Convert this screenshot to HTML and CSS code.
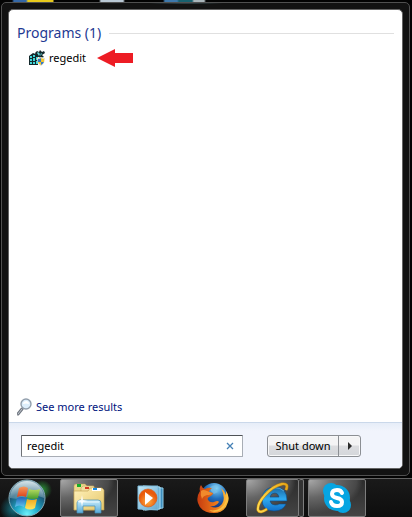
FILE: index.html
```html
<!DOCTYPE html>
<html lang="en">
<head>
<meta charset="utf-8">
<title>Start menu</title>
<link rel="stylesheet" href="styles.css">
</head>
<body>
<main class="frame">
  <div class="panel">
    <section class="results">
      <h1 class="heading">Programs (1)</h1>
      <div class="result-row">
        <a class="result" href="#">
          <svg width="18" height="18" viewBox="0 0 18 18" aria-hidden="true">
            <path d="M1 7l4-3 5 2v10H1z" fill="#14292c"/>
            <path d="M2 7h2v2H2zM5 6h2v2H5zM2 10h2v2H2zM5 9h2v3H5zM8 8h2v3H8zM2 13h2v2H2zM5 13h2v2H5zM8 12h2v3H8z" fill="#3fd5d8"/>
            <path d="M7 4l2-2 2 1 1-2 2 2 2-1 1 2-3 2 2 2-3 1-5-2z" fill="#14292c"/>
            <path d="M9 4l1-1 2 2-1 2zM13 4l1 1-2 2z" fill="#6bdcdd"/>
            <path d="M9 9q2.500 0 4-1 2 1 4 1 0 6-4 8-4-2-4-8z" fill="#e9e4c7"/>
            <path d="M10 10q2 0 3-1v4h-3zM13 13h3q-1 2-3 3z" fill="#3578c5"/>
            <path d="M13 9q1 1 3 1v3h-3zM10 13h3v3q-2-1-3-3z" fill="#f5c72c"/>
          </svg>
          <span>regedit</span>
        </a>
        <svg class="arrow" width="36" height="18" viewBox="0 0 36 18" aria-hidden="true">
          <path d="M0 9L18 0v4h18v10H18v4z" fill="#ed1c24"/>
        </svg>
      </div>
      <a class="more" href="#">
        <svg width="16" height="18" viewBox="0 0 16 18" aria-hidden="true">
          <path d="M5 11L1 16" stroke="#707781" stroke-width="3" stroke-linecap="round"/>
          <path d="M5 11L1 16" stroke="#c3c8cf" stroke-linecap="round"/>
          <circle cx="9" cy="6" r="5" fill="#dceefb" stroke="#929fac" stroke-width="1.400"/>
          <path d="M6 6q0-3 4-3 2 1 2 3-3-1-6 0z" fill="#fff"/>
        </svg>
        <span>See more results</span>
      </a>
    </section>
    <footer class="footer">
      <div class="search">
        <input class="search-input" type="text" value="regedit" aria-label="Search programs and files">
        <button class="clear" type="button" aria-label="Clear">
          <svg width="8" height="8" viewBox="0 0 8 8"><path d="M1 1l6 6M7 1L1 7" stroke="#4580b5" stroke-width="1.300"/></svg>
        </button>
      </div>
      <div class="power">
        <button class="shut" type="button">Shut down</button>
        <button class="options" type="button" aria-label="Power options">
          <svg width="4" height="8" viewBox="0 0 4 8"><path d="M0 0l4 4-4 4z" fill="#2b2b2b"/></svg>
        </button>
      </div>
    </footer>
  </div>
</main>

<nav class="taskbar">
  <button class="orb" type="button" aria-label="Start">
    <svg width="54" height="39" viewBox="0 0 54 39">
      <defs>
        <radialGradient id="orb" cx=".5" cy=".95" r=".9">
          <stop offset="0" stop-color="#6ff2fa"/><stop offset=".35" stop-color="#1fa9c9"/>
          <stop offset=".7" stop-color="#1b5877"/><stop offset="1" stop-color="#7fa0b0"/>
        </radialGradient>
        <linearGradient id="gloss" x2="0" y2="1"><stop stop-color="#e4eff2" stop-opacity=".85"/><stop offset="1" stop-color="#9dbfca" stop-opacity=".35"/></linearGradient>
        <radialGradient id="glow"><stop stop-color="#2ca53c" stop-opacity=".9"/><stop offset="1" stop-color="#2ca53c" stop-opacity="0"/></radialGradient>
        <radialGradient id="glow2"><stop stop-color="#168ba0" stop-opacity=".8"/><stop offset="1" stop-color="#168ba0" stop-opacity="0"/></radialGradient>
        <linearGradient id="wr" x2="0" y2="1"><stop stop-color="#f79a5c"/><stop offset="1" stop-color="#dc431d"/></linearGradient>
        <linearGradient id="wg" x2="0" y2="1"><stop stop-color="#b9dc63"/><stop offset="1" stop-color="#469c2b"/></linearGradient>
        <linearGradient id="wb" x2="0" y2="1"><stop stop-color="#2363b8"/><stop offset="1" stop-color="#5fc4ee"/></linearGradient>
        <linearGradient id="wy" x2="0" y2="1"><stop stop-color="#efa71e"/><stop offset="1" stop-color="#ffe65b"/></linearGradient>
      </defs>
      <circle cx="42" cy="11" r="10" fill="url(#glow)"/>
      <circle cx="14" cy="30" r="14" fill="url(#glow2)"/>
      <circle cx="27" cy="19" r="18" fill="url(#orb)" stroke="#86aab6"/>
      <path d="M10 19a17 17 0 0 1 34 0q-9-4-17-1-9 3-17 1z" fill="url(#gloss)"/>
      <path d="M19 9q5-3 9 0l-2 9q-4-2-9 0z" fill="url(#wr)"/>
      <path d="M29 10q5 2 11 0l-2 9q-5 2-11 0z" fill="url(#wg)"/>
      <path d="M17 19q5-2 9 0l-2 9q-5-3-9 0z" fill="url(#wb)"/>
      <path d="M27 20q5 2 10 0l-2 9q-5 3-10 0z" fill="url(#wy)"/>
    </svg>
  </button>

  <button class="task running" type="button" aria-label="Windows Explorer">
    <svg width="34" height="32" viewBox="0 0 34 32">
      <defs>
        <linearGradient id="fold" x2="1" y2="1"><stop stop-color="#fff1ba"/><stop offset="1" stop-color="#e5c669"/></linearGradient>
        <linearGradient id="stand" x2="0" y2="1"><stop stop-color="#c9edfc"/><stop offset="1" stop-color="#58a9d7"/></linearGradient>
      </defs>
      <path d="M2 4q0-2 2-2h9l2 2h7v24H2z" fill="#edd78c" stroke="#b8985a" stroke-width=".5"/>
      <path d="M5 2h4v3H5z" fill="#14ae29"/>
      <path d="M9 6l2-2h10l2 3h4v21H9z" fill="#f2df9f" stroke="#b8985a" stroke-width=".5"/>
      <path d="M13 5h4v2h-4z" fill="#d53a22"/>
      <path d="M2 9h14l2-3h12l2 2v20H2z" fill="url(#fold)" stroke="#bd9c4b" stroke-width=".6"/>
      <path d="M20 6h9v3h-9z" fill="#fff"/><path d="M21 6h4v2h-4z" fill="#168be0"/>
      <path d="M5 31V21q0-3 3-3h18q3 0 3 3v10h-6v-7H11v7z" fill="url(#stand)" stroke="#468cb4" stroke-width=".7"/>
      <path d="M7 20h20" stroke="#fff" stroke-opacity=".7"/>
      <path d="M10 13l1 5 5 1-5 1-1 5-1-5-5-1 5-1z" fill="#fff" opacity=".9"/>
    </svg>
  </button>

  <button class="task" type="button" aria-label="Media Player">
    <svg width="28" height="28" viewBox="0 0 28 28">
      <defs>
        <linearGradient id="card" x2="1" y2="1"><stop stop-color="#c2e7f7"/><stop offset="1" stop-color="#66a9d0"/></linearGradient>
        <radialGradient id="play" cx=".5" cy=".7"><stop stop-color="#ffae42"/><stop offset="1" stop-color="#e95a0b"/></radialGradient>
      </defs>
      <path d="M8 3l18 1v20l-18 2z" fill="#3e8dbc" stroke="#91cde9"/>
      <path d="M6 2l17 1v22l-17 1z" fill="#5fa5cd" stroke="#b3e2f5"/>
      <path d="M1 2h20v24l-20-1z" fill="url(#card)" stroke="#7fbddd"/>
      <circle cx="11" cy="14" r="9" fill="url(#play)" stroke="#d95910" stroke-width=".6"/>
      <path d="M8 8l8 6-8 7z" fill="#fff"/>
    </svg>
  </button>

  <button class="task" type="button" aria-label="Firefox">
    <svg width="32" height="32" viewBox="0 0 32 32">
      <defs>
        <radialGradient id="globe" cx=".6" cy=".2" r=".8"><stop stop-color="#83d2f5"/><stop offset=".5" stop-color="#216fbd"/><stop offset="1" stop-color="#132a73"/></radialGradient>
        <linearGradient id="fox" x1="0" x2="1"><stop stop-color="#c63c10"/><stop offset=".6" stop-color="#ed7919"/><stop offset="1" stop-color="#ffc741"/></linearGradient>
      </defs>
      <circle cx="17" cy="14" r="13" fill="url(#globe)"/>
      <path d="M13 5q5-3 8-1l-3 3 3 3-4 2-3-3z" fill="#7fc3e7" opacity=".6"/>
      <path d="M4 3q1 3 4 4 3-2 7-1-3 2-3 4l4 1q0 2-4 4-2 1-1 3 2 3 6 2 4-2 5 0-3 5-9 4 7 4 12-2 4-6-1-16 4 3 5 7V9q4 5 2 11-3 11-14 11Q4 31 1 21-1 15 3 9q-1-3 1-6z" fill="url(#fox)"/>
      <path d="M27 8q5 8 0 15-6 7-15 5 5 4 12 0 10-8 3-20z" fill="#ffcf4b" opacity=".75"/>
      <path d="M4 9q2-2 6 0l5 2q-1 2-5 2-4 1-5 4-2-4-1-8z" fill="#f18a2c"/>
    </svg>
  </button>

  <button class="task stacked" type="button" aria-label="Internet Explorer">
    <span class="running stack-front">
      <svg width="34" height="32" viewBox="0 0 34 32">
        <defs>
          <linearGradient id="ie" x2="0" y2="1"><stop stop-color="#1b659f"/><stop offset=".5" stop-color="#2eaaf0"/><stop offset="1" stop-color="#126fc9"/></linearGradient>
          <linearGradient id="ring" x2="1"><stop stop-color="#ffd94d"/><stop offset="1" stop-color="#e7a617"/></linearGradient>
        </defs>
        <path fill-rule="evenodd" d="M31 19H14q1 4 5 4 3 0 4-1h7q-3 7-12 7Q6 29 6 17 7 5 19 5q12 0 12 14zM14 15h9q-1-4-4-4-4 0-5 4z" fill="url(#ie)" stroke="#0b4b86" stroke-width=".6"/>
        <path d="M10 10Q20 2 28 9" fill="none" stroke="#79cbf0" opacity=".6"/>
        <path d="M30 8q3-7-4-6Q17 4 9 13 1 22 2 28q2 4 9-1" fill="none" stroke="#b9810f" stroke-width="3"/>
        <path d="M30 8q3-7-4-6Q17 4 9 13 1 22 2 28q2 4 9-1" fill="none" stroke="url(#ring)" stroke-width="2"/>
      </svg>
    </span>
    <span class="running stack-back"></span>
  </button>

  <button class="task running" type="button" aria-label="Skype">
    <svg width="30" height="30" viewBox="0 0 30 30">
      <g fill="#06a5e2"><circle cx="15" cy="15" r="13"/><circle cx="9" cy="8" r="8"/><circle cx="21" cy="22" r="8"/></g>
      <path d="M20 10q-1-3-5-3-5 0-5 4 0 3 5 4 5 1 5 4 0 4-5 4-5 0-6-4" fill="none" stroke="#fff" stroke-width="4" stroke-linecap="round"/>
    </svg>
  </button>
</nav>
</body>
</html>
```
FILE: styles.css
```css
* {
  box-sizing: border-box;
}

body {
  margin: 0;
  min-height: 100vh;
  display: flex;
  flex-direction: column;
  background:
    linear-gradient(90deg, transparent 12px, #3468a8 14px 26px, #e8ca1c 28px 53px, transparent 54px 99px, #b9c8d4 101px 123px, transparent 125px 163px, #3d78ac 165px 177px, #17616f 179px 192px, #a9b5ba 194px 204px, transparent 206px) top / 100% 2px no-repeat,
    #030303;
  font: 11px/16px "Noto Sans", "Open Sans", sans-serif;
  color: #000;
}

button,
input {
  margin: 0;
  padding: 0;
  border: 0;
  background: none;
  font: inherit;
  color: inherit;
}

a {
  color: inherit;
  text-decoration: none;
}

svg {
  display: block;
  flex: none;
}

.frame {
  flex: 1;
  display: flex;
  margin: 2px 2px 2px 1px;
  padding: 6px;
  border: 1px solid #505050;
  border-radius: 5px;
  background:
    radial-gradient(ellipse at 40px 0, #4d4213, transparent 28px) top / 100% 7px no-repeat,
    radial-gradient(ellipse at 112px 0, #484d52, transparent 24px) top / 100% 7px no-repeat,
    radial-gradient(ellipse at 184px 0, #3c5358, transparent 40px) top / 100% 7px no-repeat,
    #121212;
}

.panel {
  flex: 1;
  display: flex;
  flex-direction: column;
  border: 1px solid #646464;
  border-radius: 5px;
  overflow: hidden;
  background: #fff;
}

.results {
  flex: 1;
  display: flex;
  flex-direction: column;
  padding: 13px 8px 6px;
}

.heading {
  display: flex;
  align-items: center;
  gap: 8px;
  margin: 0;
  font-size: 14px;
  line-height: 20px;
  font-weight: 400;
  color: #1f3a93;
}

.heading::after {
  content: "";
  flex: 1;
  height: 1px;
  background: #e0e0e0;
}

.result-row {
  display: flex;
  align-items: center;
  gap: 11px;
  padding: 6px 0 0 11px;
}

.result,
.more {
  display: flex;
  align-items: center;
  gap: 3px;
}

.more {
  margin-top: auto;
  color: #00147e;
}

.footer {
  display: flex;
  align-items: center;
  gap: 24px;
  height: 46px;
  padding: 0 41px 0 12px;
  border-top: 1px solid #cad8ea;
  background: linear-gradient(#e6edf8, #f1f4fc 8px);
}

.search {
  flex: 1;
  display: flex;
  align-items: center;
  height: 22px;
  padding: 0 8px 0 5px;
  border: 1px solid #a8adb5;
  border-top-color: #4f5256;
  border-left-color: #6e7176;
  border-radius: 1px;
  background: #fff;
}

.search-input {
  flex: 1;
  min-width: 0;
  outline: 0;
}

.power {
  display: flex;
  width: 94px;
  height: 22px;
  border: 1px solid #8c8f94;
  border-radius: 3px;
  background: linear-gradient(#f4f4f5 0 45%, #dcdde0 50%, #d4d6da);
  box-shadow: inset 0 0 0 1px #f8f8f9;
}

.shut {
  flex: 1;
  white-space: nowrap;
}

.options {
  display: grid;
  place-items: center;
  width: 22px;
  border-left: 1px solid #8c8f94;
}

.taskbar {
  display: flex;
  gap: 4px;
  height: 39px;
  border-top: 1px solid #626262;
  background: linear-gradient(#1a1a1a, #0d0d0d);
}

.orb {
  width: 56px;
  overflow: hidden;
}

.task {
  display: grid;
  place-items: center;
  width: 58px;
  height: 38px;
}

.running {
  border: 1px solid #7d7d7d;
  border-radius: 2px;
  background:
    radial-gradient(ellipse at 0 0, #a8a8a8, #666 35%, #484848 60%, transparent 68%),
    linear-gradient(#2c2c2c, #444);
}

.stacked {
  display: flex;
}

.stack-front {
  flex: 1;
  height: 100%;
  display: grid;
  place-items: center;
}

.stack-back {
  width: 5px;
  height: 100%;
  border-left: 0;
  background: #333;
}
```
